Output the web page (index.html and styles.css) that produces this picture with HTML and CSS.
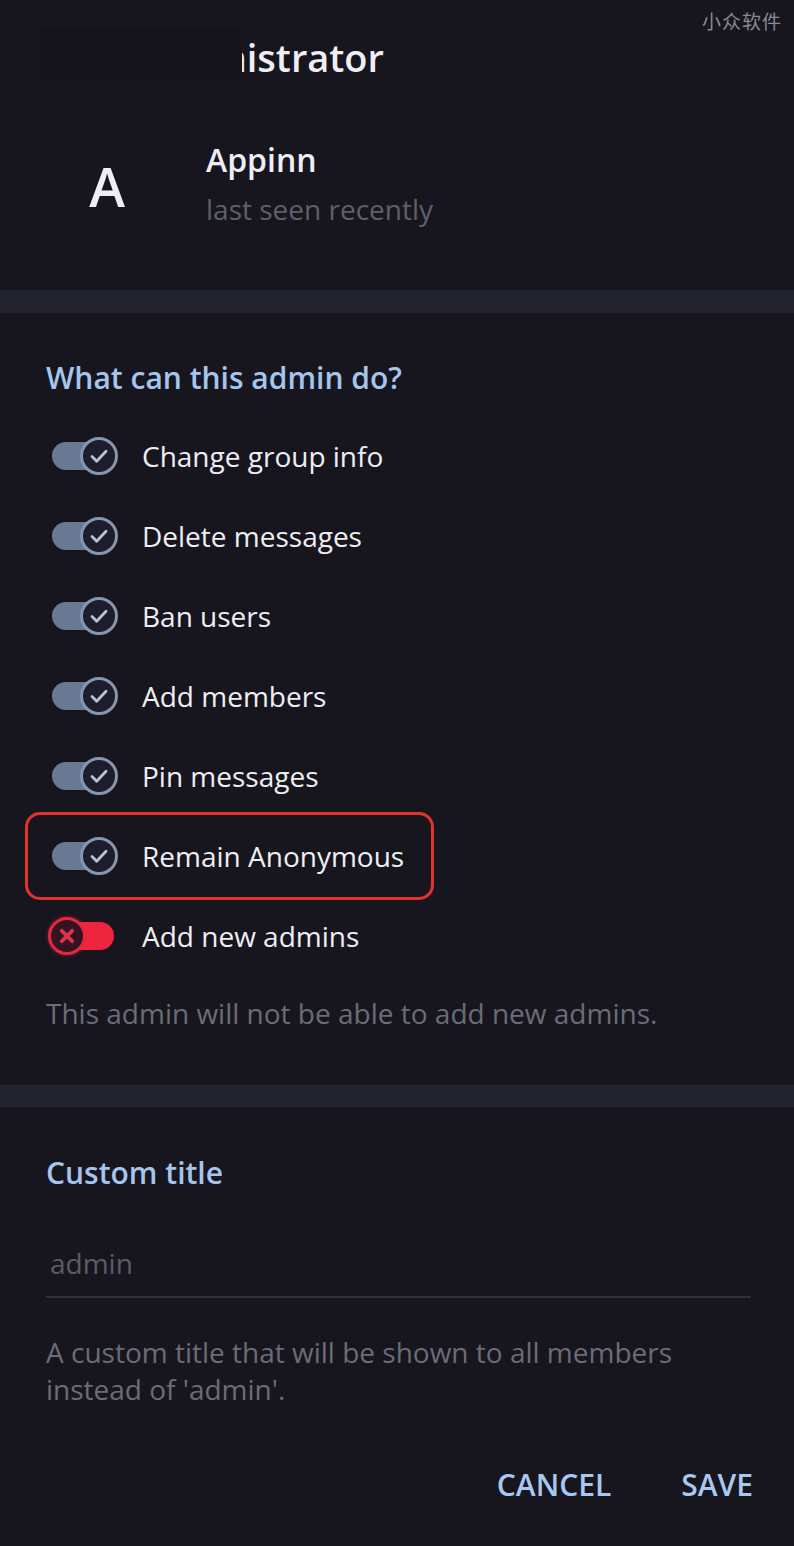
FILE: index.html
```html
<!DOCTYPE html>
<html lang="en">
<head>
    <meta charset="UTF-8">
    <meta name="viewport" content="width=device-width, initial-scale=1.0">
    <title>Edit Administrator</title>
    <link rel="stylesheet" href="styles.css">
</head>
<body>
    <!-- Watermark -->
    <div class="watermark">小众软件</div>

    <!-- Header -->
    <header class="top">
        <h1 class="title">Administrator</h1>
        <div class="title-mask"></div>
    </header>

    <!-- Profile -->
    <div class="profile">
        <div class="avatar">A</div>
        <div class="info">
            <div class="name">Appinn</div>
            <div class="status">last seen recently</div>
        </div>
    </div>

    <div class="band"></div>

    <!-- Rights -->
    <section class="section">
        <h2 class="section-title">What can this admin do?</h2>
        <ul class="rights">
            <li class="right">
                <span class="toggle"><span class="track"></span><span class="knob"><svg viewBox="0 0 24 24"><path d="M6 12.5l4 4L18 8"/></svg></span></span>
                <span class="label">Change group info</span>
            </li>
            <li class="right">
                <span class="toggle"><span class="track"></span><span class="knob"><svg viewBox="0 0 24 24"><path d="M6 12.5l4 4L18 8"/></svg></span></span>
                <span class="label">Delete messages</span>
            </li>
            <li class="right">
                <span class="toggle"><span class="track"></span><span class="knob"><svg viewBox="0 0 24 24"><path d="M6 12.5l4 4L18 8"/></svg></span></span>
                <span class="label">Ban users</span>
            </li>
            <li class="right">
                <span class="toggle"><span class="track"></span><span class="knob"><svg viewBox="0 0 24 24"><path d="M6 12.5l4 4L18 8"/></svg></span></span>
                <span class="label">Add members</span>
            </li>
            <li class="right">
                <span class="toggle"><span class="track"></span><span class="knob"><svg viewBox="0 0 24 24"><path d="M6 12.5l4 4L18 8"/></svg></span></span>
                <span class="label">Pin messages</span>
            </li>
            <li class="right marked">
                <span class="toggle"><span class="track"></span><span class="knob"><svg viewBox="0 0 24 24"><path d="M6 12.5l4 4L18 8"/></svg></span></span>
                <span class="label">Remain Anonymous</span>
            </li>
            <li class="right">
                <span class="toggle off"><span class="track"></span><span class="knob"><svg viewBox="0 0 24 24"><path d="M7.5 7.5l9 9M16.5 7.5l-9 9"/></svg></span></span>
                <span class="label">Add new admins</span>
            </li>
        </ul>
        <p class="note">This admin will not be able to add new admins.</p>
    </section>

    <div class="band band-low"></div>

    <!-- Custom title -->
    <section class="section section-title-box">
        <h2 class="section-title">Custom title</h2>
        <div class="field">
            <input type="text" placeholder="admin">
        </div>
        <p class="note note-wide">A custom title that will be shown to all members instead of 'admin'.</p>
        <div class="actions">
            <button class="btn">Cancel</button>
            <button class="btn">Save</button>
        </div>
    </section>
</body>
</html>
```

FILE: styles.css
```css
/* General Styles */
* {
    box-sizing: border-box;
}

body {
    margin: 0;
    width: 794px;
    min-height: 1546px;
    position: relative;
    background: #17161f;
    color: #eeeef3;
    font-family: "Open Sans", "Noto Sans", sans-serif;
}

.watermark {
    position: absolute;
    top: 7px;
    right: 12px;
    font-family: "Noto Sans CJK SC", sans-serif;
    font-size: 19px;
    color: #8a8a90;
    letter-spacing: 1px;
}

/* Header */
.top {
    position: relative;
    padding-top: 30px;
}

.title {
    margin: 0;
    padding-left: 127px;
    font-size: 38px;
    font-weight: 600;
    line-height: 54px;
}

.title-mask {
    position: absolute;
    left: 40px;
    top: 28px;
    width: 202px;
    height: 52px;
    background: #15141c;
}

/* Profile */
.profile {
    display: flex;
    align-items: center;
    padding: 50px 0 56px 46px;
}

.avatar {
    width: 122px;
    padding-top: 4px;
    font-size: 54px;
    font-weight: 600;
    line-height: 96px;
    text-align: center;
}

.info {
    margin-left: 38px;
}

.name {
    font-size: 32px;
    font-weight: 600;
    line-height: 40px;
}

.status {
    margin-top: 10px;
    font-size: 28px;
    line-height: 38px;
    color: #5d6068;
}

.band {
    height: 23px;
    background: #23232d;
}

.band-low {
    height: 22px;
}

/* Sections */
.section {
    padding: 45px 43px 53px 46px;
}

.section-title {
    margin: 0;
    font-size: 30px;
    font-weight: 600;
    line-height: 40px;
    color: #a5c5ec;
}

.rights {
    list-style: none;
    margin: 18px 0 0;
    padding: 0;
}

.right {
    position: relative;
    display: flex;
    align-items: center;
    height: 80px;
}

.right.marked::after {
    content: "";
    position: absolute;
    left: -21px;
    top: -4px;
    bottom: -4px;
    width: 403px;
    border: 3px solid #e3342b;
    border-radius: 15px;
}

/* Toggle */
.toggle {
    position: relative;
    flex: none;
    width: 68px;
    height: 38px;
    margin: 0 24px 0 4px;
}

.track {
    position: absolute;
    left: 2px;
    top: 5px;
    width: 62px;
    height: 28px;
    border-radius: 14px;
    background: #6a7993;
}

.knob {
    position: absolute;
    top: 0;
    left: 30px;
    width: 38px;
    height: 38px;
    border-radius: 50%;
    background: #1c1e2c;
    border: 3px solid #8796ac;
    display: flex;
    align-items: center;
    justify-content: center;
}

.knob svg {
    width: 28px;
    height: 28px;
    fill: none;
    stroke: #b8c3d4;
    stroke-width: 2.4;
    stroke-linecap: round;
    stroke-linejoin: round;
}

.toggle.off .track {
    background: #ef2540;
}

.toggle.off .knob {
    left: -2px;
    background: #361320;
    border-color: #e3283f;
    box-shadow: 0 0 4px rgba(240, 40, 70, 0.5);
}

.toggle.off .knob svg {
    width: 28px;
    height: 28px;
    stroke: #e2334d;
    stroke-width: 3.2;
}

.label {
    font-size: 28px;
    line-height: 36px;
}

.note {
    margin: 19px 0 0;
    font-size: 28px;
    line-height: 37px;
    color: #6a6d75;
}

/* Custom title */
.section-title-box {
    padding-top: 46px;
}

.field {
    margin-top: 52px;
    padding: 0 0 15px 4px;
    border-bottom: 2px solid #30313b;
}

.field input {
    width: 100%;
    height: 36px;
    padding: 0;
    border: 0;
    outline: none;
    background: none;
    font: inherit;
    font-size: 28px;
    line-height: 36px;
    color: #e0e0e6;
}

.field input::placeholder {
    color: #5a5c64;
}

.note-wide {
    margin-top: 36px;
}

.actions {
    display: flex;
    justify-content: flex-end;
    gap: 70px;
    margin: 57px -2px 0 0;
}

.btn {
    padding: 0;
    border: 0;
    background: none;
    font: inherit;
    font-size: 30px;
    font-weight: 600;
    line-height: 40px;
    color: #a8c8ef;
    text-transform: uppercase;
    cursor: pointer;
}
```
